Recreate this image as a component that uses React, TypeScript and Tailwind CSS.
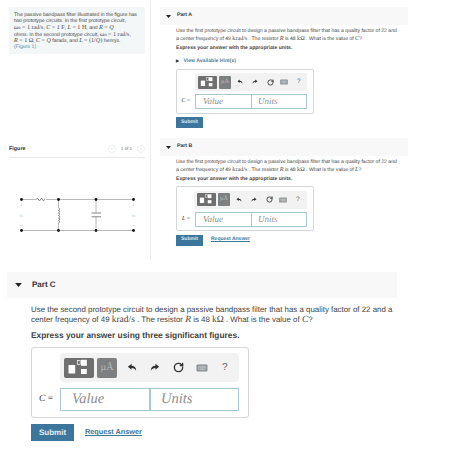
import { ReactNode } from "react";
import { RotateCw } from "lucide-react";

const SANS = "font-['Liberation_Sans',Arial,sans-serif]";
const SERIF = "font-['Liberation_Serif','Times_New_Roman',serif]";

function M({ children }: { children: ReactNode }) {
  return <span className={`${SERIF} text-[1.2em] italic`}>{children}</span>;
}

function R({ children }: { children: ReactNode }) {
  return <span className={`${SERIF} text-[1.2em]`}>{children}</span>;
}

function Caret({ large }: { large?: boolean }) {
  return (
    <svg className={large ? "h-[4px] w-[7px]" : "h-[3px] w-[5px]"} viewBox="0 0 10 6">
      <path d="M0 0h10L5 6z" fill="#222" />
    </svg>
  );
}

function TemplatesIcon() {
  return (
    <svg viewBox="0 0 30 20" className="h-full w-full">
      <rect x="4.5" y="7" width="6.7" height="8.5" fill="#fff" />
      <rect x="13.4" y="2.5" width="2.8" height="4" fill="none" stroke="#fff" strokeWidth="0.7" />
      <rect x="17" y="1.8" width="5.8" height="6" fill="#fff" />
      <rect x="17" y="11" width="5.8" height="5" fill="#fff" />
    </svg>
  );
}

function Undo({ flip }: { flip?: boolean }) {
  return (
    <svg viewBox="0 0 12 12" className={`h-full w-full ${flip ? "-scale-x-100" : ""}`}>
      <path d="M1 4.5 5.5 1v2.4c3.4 0 5.5 2 5.5 6.1C9.8 7 8 6 5.5 6v2.2z" fill="#333" />
    </svg>
  );
}

function Keyboard() {
  return (
    <svg viewBox="0 0 14 10" className="h-full w-full">
      <rect x="0.5" y="1" width="13" height="8" rx="1" fill="#9a9fa3" stroke="#777" strokeWidth="0.6" />
      <path d="M2.5 3.5h9M2.5 5h9M4 6.8h6" stroke="#ddd" strokeWidth="0.7" />
    </svg>
  );
}

function SmallAnswer({ label, barClass }: { label: string; barClass: string }) {
  return (
    <div className="h-[45px] w-[138px] rounded-[2px] border border-[#d5d8da] bg-white">
      <div className={`flex h-[18px] items-center rounded-[2px] bg-[#f2f2f2] ${barClass}`}>
        <div className="ml-[3px] h-[13px] w-[19px] rounded-[1px] bg-[#6f6f70]">
          <TemplatesIcon />
        </div>
        <div className={`ml-[2px] flex h-[13px] w-[12px] items-center justify-center rounded-[1px] bg-[#7d7f81] text-[6px] text-[#bbb] ${SERIF}`}>
          µÅ
        </div>
        <div className="ml-[6px] h-[6px] w-[6px]"><Undo /></div>
        <div className="ml-[9px] h-[6px] w-[6px]"><Undo flip /></div>
        <RotateCw className="ml-[8.5px] h-[7px] w-[7px] text-[#333]" strokeWidth={3} />
        <div className="ml-[6.5px] h-[6px] w-[8px]"><Keyboard /></div>
        <span className="ml-[9px] text-[6.5px] text-[#666]">?</span>
      </div>
      <div className="mt-[3px] flex items-center">
        <span className={`w-[18px] text-center text-[6px] ${SERIF}`}><i>{label}</i> =</span>
        <div className="flex h-[15px] w-[112px] border border-[#a9c8d4]">
          <span className={`flex-1 border-r border-[#a9c8d4] pl-[7px] text-[9px] leading-[13px] text-[#8e8e8e] italic ${SERIF}`}>Value</span>
          <span className={`flex-1 pl-[6px] text-[9px] leading-[13px] text-[#8e8e8e] italic ${SERIF}`}>Units</span>
        </div>
      </div>
    </div>
  );
}

function SmallHeader({ title }: { title: string }) {
  return (
    <div className="flex h-[18px] items-center bg-[#f8f8f8]">
      <div className="ml-[6px] flex w-[11px]"><Caret /></div>
      <span className="text-[5.2px] font-bold text-[#333]">{title}</span>
    </div>
  );
}

function SmallSubmit() {
  return (
    <div className="flex h-[11px] w-[27px] items-center justify-center bg-[#3d769c] text-[5px] font-bold text-[#dce8ef]">Submit</div>
  );
}

function Circuit() {
  const nodes = [21.5, 58.5, 96, 133.5];
  return (
    <svg viewBox="0 0 150 50" className="mt-[36px] h-[50px] w-[150px]">
      <g stroke="#a8a8a8" strokeWidth="0.8" fill="none">
        <path d="M21.5 5.5H36M46 5.5H133.5M21.5 36.5H133.5M96 5.5V19M96 22.8V36.5M58.5 5.5V14M58.5 29V36.5" />
      </g>
      <path d="M36.5 5.5l1-1.5 2 3 2-3 2 3 1.5-2.5" fill="none" stroke="#555" strokeWidth="0.6" />
      <path d="M58.5 14q3 1 0 2.5q3 1 0 2.5q3 1 0 2.5q3 1 0 2.5q3 1 0 2.5q3 1 0 2.5" fill="none" stroke="#555" strokeWidth="0.7" />
      <path d="M91.5 19h9.5M91.5 22.8h9.5" stroke="#555" strokeWidth="0.7" />
      {nodes.map((x) => (
        <g key={x}>
          <circle cx={x} cy="5.5" r="1.4" fill="#111" />
          <circle cx={x} cy="36.5" r="1.4" fill="#111" />
        </g>
      ))}
      <text x="19.5" y="23" fontSize="5" fontStyle="italic" fill="#9ccfd0" fontFamily="Liberation Serif">v<tspan fontSize="3.5">s</tspan></text>
      <text x="131.5" y="23" fontSize="5" fontStyle="italic" fill="#9ccfd0" fontFamily="Liberation Serif">v<tspan fontSize="3.5">o</tspan></text>
      <path d="M20 11h3M21.5 9.5v3M132 11h3M133.5 9.5v3M20 31.5h3M132 31.5h3" stroke="#ccc" strokeWidth="0.5" />
    </svg>
  );
}

export default function App() {
  return (
    <div className={`h-[450px] w-[474px] overflow-hidden bg-white text-[#333] [text-rendering:geometricPrecision] ${SANS}`}>
      <div className="flex h-[260px]">
        {/* Left column */}
        <div className="w-[151px] shrink-0 border-r border-[#eee] pt-[7px]">
          <div className="ml-[9px] h-[47px] w-[136px] bg-[#f3f7f8] px-[5px] pt-[6px] text-[5.1px] leading-[5.9px] whitespace-nowrap text-[#444]">
            The passive bandpass filter illustrated in the figure has<br />
            two prototype circuits. In the first prototype circuit,<br />
            <M>ω</M><span className="text-[4px]">o</span> <R>= 1 rad/s</R>, <M>C</M> <R>= 1 F</R>, <M>L</M> <R>= 1 H</R>, and <M>R</M> <R>=</R> <M>Q</M><br />
            ohms. In the second prototype circuit, <M>ω</M><span className="text-[4px]">o</span> <R>= 1 rad/s</R>,<br />
            <M>R</M> <R>= 1 Ω</R>, <M>C</M> <R>=</R> <M>Q</M> farads, and <M>L</M> <R>= (1/</R><M>Q</M><R>)</R> henrys.<br />
            <span className="text-[#4a8aa8]">(Figure 1)</span>
          </div>
          <div className="mt-[91px] ml-[9px] flex w-[136px] items-center border-b border-[#e8e8e8] pb-[4px]">
            <span className="text-[5.4px] font-bold text-[#333]">Figure</span>
            <div className="ml-auto flex items-center gap-[5px] text-[4.5px] text-[#666]">
              <span className="flex h-[8px] w-[8px] items-center justify-center rounded-full border border-[#f0f0f0] text-[#ccc]">‹</span>
              1 of 1
              <span className="flex h-[8px] w-[8px] items-center justify-center rounded-full border border-[#f0f0f0] text-[#ccc]">›</span>
            </div>
          </div>
          <Circuit />
        </div>

        {/* Right column */}
        <div className="ml-[9px] w-[248px] pt-[7px]">
          <SmallHeader title="Part A" />
          <div className="pl-[16px] pr-[8px] pt-[3px]">
            <p className="text-[5.1px] leading-[7.5px] text-[#444]">
              Use the first prototype circuit to design a passive bandpass filter that has a quality factor of 22 and a center frequency of 49 <R>krad/s</R> . The resistor <M>R</M> is 48 <R>kΩ</R> . What is the value of <M>C</M>?
            </p>
            <p className="mt-[2px] text-[5.1px] leading-[7.5px] font-bold text-[#444]">Express your answer with the appropriate units.</p>
            <p className="mt-[4px] text-[5.1px] leading-[7.5px] font-bold text-[#4a7f9c]">
              <span className="mr-[3px] text-[4px] text-[#333]">▶</span> View Available Hint(s)
            </p>
            <div className="mt-[4px]">
              <SmallAnswer label="C" barClass="ml-[18px] mt-[3px] w-[112px]" />
            </div>
            <div className="mt-[3px]"><SmallSubmit /></div>
          </div>

          <div className="mt-[10px]"><SmallHeader title="Part B" /></div>
          <div className="pl-[16px] pr-[8px] pt-[3px]">
            <p className="text-[5.1px] leading-[7.5px] text-[#444]">
              Use the first prototype circuit to design a passive bandpass filter that has a quality factor of 22 and a center frequency of 49 <R>krad/s</R> . The resistor <M>R</M> is 48 <R>kΩ</R> . What is the value of <M>L</M>?
            </p>
            <p className="mt-[2px] text-[5.1px] leading-[7.5px] font-bold text-[#444]">Express your answer with the appropriate units.</p>
            <div className="mt-[2px]">
              <SmallAnswer label="L" barClass="ml-[17px] mt-[4px] w-[113px]" />
            </div>
            <div className="mt-[4px] flex items-center">
              <SmallSubmit />
              <span className="ml-[8px] text-[5px] font-bold text-[#3f7595] underline">Request Answer</span>
            </div>
          </div>
        </div>
      </div>

      {/* Part C */}
      <div className="ml-[7px] mt-[12px] w-[390px]">
        <div className="flex h-[26px] items-center bg-[#f8f8f8]">
          <div className="ml-[8px] flex w-[17px]"><Caret large /></div>
          <span className="text-[8px] font-bold text-[#333]">Part C</span>
        </div>
        <div className="pl-[24px] pt-[7px]">
          <p className="w-[368px] text-[7.9px] leading-[10px] text-[#444]">
            Use the second prototype circuit to design a passive bandpass filter that has a quality factor of 22 and a center frequency of 49 <R>krad/s</R> . The resistor <M>R</M> is 48 <R>kΩ</R> . What is the value of <M>C</M>?
          </p>
          <p className="mt-[5px] text-[8.4px] leading-[10px] font-bold text-[#444]">Express your answer using three significant figures.</p>
          <div className="mt-[7px] h-[71px] w-[218px] rounded-[3px] border border-[#d5d8da] bg-white">
            <div className="ml-[28px] mt-[5px] flex h-[29px] w-[179px] items-center rounded-[4px] bg-[#f2f2f2]">
              <div className="ml-[4px] h-[20px] w-[30px] rounded-[2px] bg-[#6f6f70]"><TemplatesIcon /></div>
              <div className={`ml-[3px] flex h-[20px] w-[20px] items-center justify-center rounded-[2px] bg-[#7d7f81] text-[10px] text-[#bbb] ${SERIF}`}>µÅ</div>
              <div className="ml-[10px] h-[10px] w-[10px]"><Undo /></div>
              <div className="ml-[13px] h-[10px] w-[10px]"><Undo flip /></div>
              <RotateCw className="ml-[13px] h-[11px] w-[11px] text-[#333]" strokeWidth={3} />
              <div className="ml-[12px] h-[8px] w-[12px]"><Keyboard /></div>
              <span className="ml-[14px] text-[10px] text-[#666]">?</span>
            </div>
            <div className="mt-[6px] flex items-center">
              <span className={`w-[28px] text-center text-[9.5px] ${SERIF}`}><i>C</i> =</span>
              <div className="flex h-[23px] w-[179px] border border-[#a9c8d4]">
                <span className={`flex-1 border-r-2 border-[#a9c8d4] pl-[11px] text-[14.5px] leading-[21px] text-[#8e8e8e] italic ${SERIF}`}>Value</span>
                <span className={`flex-1 pl-[10px] text-[14.5px] leading-[21px] text-[#8e8e8e] italic ${SERIF}`}>Units</span>
              </div>
            </div>
          </div>
          <div className="mt-[6px] flex items-center">
            <div className="flex h-[17px] w-[43px] items-center justify-center bg-[#3d769c] text-[8px] font-bold text-[#e6eff4]">Submit</div>
            <span className="ml-[11px] text-[7.3px] font-bold text-[#3f7595] underline">Request Answer</span>
          </div>
        </div>
      </div>
    </div>
  );
}
